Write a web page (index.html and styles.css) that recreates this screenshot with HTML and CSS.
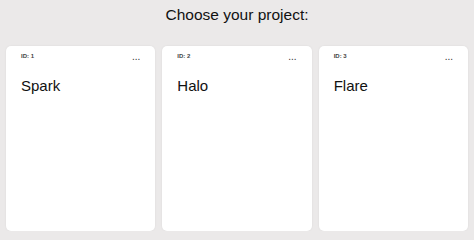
FILE: index.html
```html
<!DOCTYPE html>
<html>
<head>
<meta charset="utf-8">
<link rel="stylesheet" href="styles.css">
</head>
<body>
<h1 class="title">Choose your project:</h1>
<div class="cards">
  <div class="card">
    <div class="card-top"><span class="card-id">ID: 1</span><span class="card-menu">...</span></div>
    <div class="card-name">Spark</div>
  </div>
  <div class="card">
    <div class="card-top"><span class="card-id">ID: 2</span><span class="card-menu">...</span></div>
    <div class="card-name">Halo</div>
  </div>
  <div class="card">
    <div class="card-top"><span class="card-id">ID: 3</span><span class="card-menu">...</span></div>
    <div class="card-name">Flare</div>
  </div>
</div>
</body>
</html>
```
FILE: styles.css
```css
html, body {
  margin: 0;
  padding: 0;
  background: #ebe9e9;
  font-family: "Liberation Sans", Arial, sans-serif;
  color: #111;
}
.title {
  margin: 0;
  padding-top: 6px;
  height: 41px;
  box-sizing: border-box;
  text-align: center;
  font-size: 15.5px;
  font-weight: normal;
  line-height: 18px;
}
.cards {
  display: flex;
  gap: 7px;
  margin: 5px 6px 0 6px;
}
.card {
  flex: 1;
  height: 185px;
  background: #fff;
  border-radius: 5px;
  box-shadow: 0 0 2px rgba(0,0,0,0.08);
  padding: 6px 15px 0 15px;
  box-sizing: border-box;
}
.card-top {
  display: flex;
  justify-content: space-between;
  align-items: flex-start;
  height: 20px;
}
.card-id {
  font-size: 6px;
  line-height: 8px;
  font-weight: bold;
  color: #444;
}
.card-menu {
  font-size: 10px;
  line-height: 10px;
  color: #333;
}
.card-name {
  margin-top: 5px;
  font-size: 15px;
  line-height: 17px;
}
```
